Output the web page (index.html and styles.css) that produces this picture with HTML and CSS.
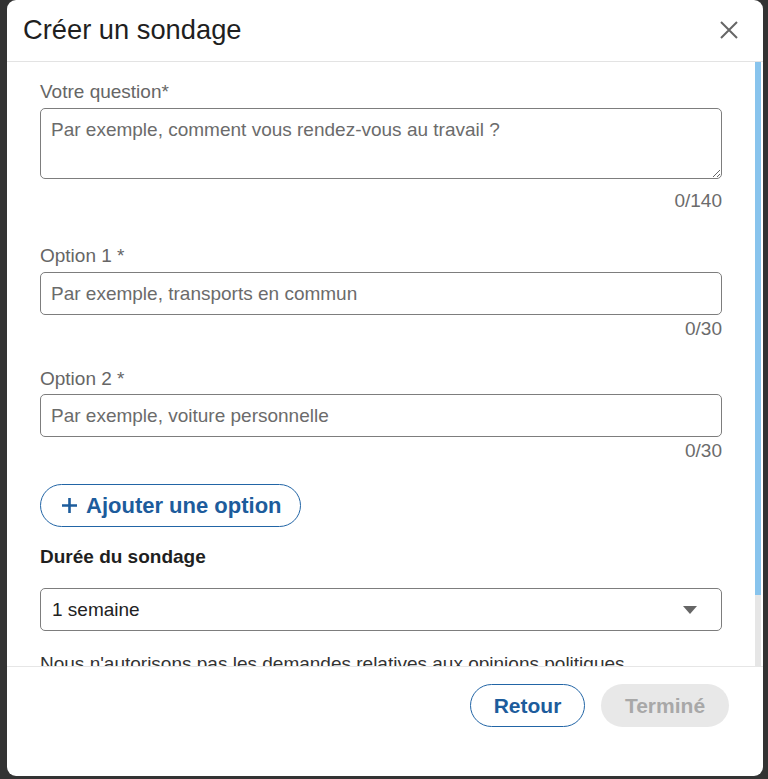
FILE: index.html
```html
<!DOCTYPE html>
<html lang="fr">
<head>
<meta charset="utf-8">
<title>Créer un sondage</title>
<link rel="stylesheet" href="styles.css">
</head>
<body>
<div class="modal">
  <header class="modal-header">
    <h2 class="modal-title">Créer un sondage</h2>
    <button class="close-btn" aria-label="Fermer">
      <svg width="20" height="20" viewBox="0 0 20 20"><path d="M2 2 L18 18 M18 2 L2 18" stroke="#666" stroke-width="2" fill="none"/></svg>
    </button>
  </header>
  <div class="modal-main">
    <div class="modal-body">
      <label class="field-label">Votre question*</label>
      <textarea class="question" placeholder="Par exemple, comment vous rendez-vous au travail ?"></textarea>
      <div class="counter counter-q">0/140</div>

      <label class="field-label opt1">Option 1 *</label>
      <input class="text-input in1" type="text" placeholder="Par exemple, transports en commun">
      <div class="counter">0/30</div>

      <label class="field-label opt2">Option 2 *</label>
      <input class="text-input in2" type="text" placeholder="Par exemple, voiture personnelle">
      <div class="counter">0/30</div>

      <button class="add-option">
        <svg width="17" height="17" viewBox="0 0 17 17"><path d="M8.5 1 V16 M1 8.5 H16" stroke="currentColor" stroke-width="2.6" fill="none"/></svg>
        <span>Ajouter une option</span>
      </button>

      <div class="section-title">Durée du sondage</div>
      <div class="select">
        <span>1 semaine</span>
        <span class="caret"></span>
      </div>

      <p class="notice">Nous n'autorisons pas les demandes relatives aux opinions politiques, informations médicales ou autres données sensibles.</p>
    </div>
    <div class="scrollbar" aria-hidden="true">
      <div class="scroll-thumb"></div>
      <div class="scroll-rest"></div>
    </div>
  </div>
  <footer class="modal-footer">
    <button class="btn btn-secondary">Retour</button>
    <button class="btn btn-disabled" disabled>Terminé</button>
  </footer>
</div>
</body>
</html>
```

FILE: styles.css
```css
* { box-sizing: border-box; }

html, body {
  margin: 0;
  height: 779px;
  overflow: hidden;
}

body {
  background: #333333;
  font-family: "Liberation Sans", Arial, sans-serif;
  padding: 0 5px 0 7px;
}

.modal {
  width: 756px;
  height: 776px;
  background: #ffffff;
  border-radius: 9px;
  display: flex;
  flex-direction: column;
  overflow: hidden;
}

.modal-header {
  height: 62px;
  flex: none;
  border-bottom: 1px solid #e3e3e3;
  display: flex;
  align-items: center;
  justify-content: space-between;
  padding: 0 24px 0 16px;
}

.modal-title {
  margin: 0;
  font-weight: normal;
  font-size: 27.3px;
  color: #1f1f1f;
  padding-bottom: 2px;
}

.close-btn {
  background: none;
  border: 0;
  padding: 0;
  width: 20px;
  height: 20px;
  display: flex;
  margin-bottom: 2px;
}

.modal-main {
  height: 604px;
  flex: none;
  display: flex;
}

.modal-body {
  flex: 1;
  min-width: 0;
  overflow: hidden;
  padding: 18px 33px 0 33px;
  display: flex;
  flex-direction: column;
}

.modal-body > * { flex: none; }

.scrollbar {
  width: 6px;
  margin-right: 2px;
  display: flex;
  flex-direction: column;
}
.scroll-thumb {
  height: 533px;
  background: #88c4ed;
}
.scroll-rest {
  flex: 1;
  background: #e6e6e6;
}

.field-label {
  font-size: 19px;
  line-height: 24px;
  color: #666666;
}

.opt1 { margin-top: 31px; }
.opt2 { margin-top: 26px; }

.question {
  margin-top: 4px;
  height: 71px;
  width: 100%;
  border: 1px solid #7d7d7d;
  border-radius: 5px;
  padding: 9px 10px;
  font-family: "Liberation Sans", Arial, sans-serif;
  font-size: 19px;
  line-height: 24px;
  color: #222;
  resize: vertical;
  outline: none;
}

.text-input {
  height: 43px;
  width: 100%;
  border: 1px solid #7d7d7d;
  border-radius: 5px;
  padding: 0 10px;
  font-family: "Liberation Sans", Arial, sans-serif;
  font-size: 19px;
  color: #222;
  outline: none;
}
.in1 { margin-top: 4px; }
.in2 { margin-top: 3px; }

.question::placeholder,
.text-input::placeholder {
  color: #6b6b6b;
}

.counter {
  text-align: right;
  font-size: 19px;
  line-height: 24px;
  color: #6b6b6b;
  margin-top: 2px;
}
.counter-q { margin-top: 10px; }

.add-option {
  margin-top: 21px;
  align-self: flex-start;
  width: 261px;
  height: 43px;
  border: 1.5px solid #2265a6;
  border-radius: 22px;
  background: #fff;
  color: #1d5c9c;
  font-family: "Liberation Sans", Arial, sans-serif;
  font-weight: bold;
  font-size: 22px;
  display: flex;
  align-items: center;
  gap: 8px;
  padding: 0 0 0 20px;
}

.section-title {
  margin-top: 18px;
  font-size: 19px;
  line-height: 24px;
  font-weight: bold;
  color: #1f1f1f;
}

.select {
  margin-top: 19px;
  height: 43px;
  border: 1px solid #7d7d7d;
  border-radius: 5px;
  display: flex;
  align-items: center;
  justify-content: space-between;
  padding: 0 24px 0 11px;
  font-size: 19px;
  color: #222;
}

.caret {
  width: 0;
  height: 0;
  border-left: 7px solid transparent;
  border-right: 7px solid transparent;
  border-top: 8px solid #666;
}

.notice {
  margin: 21px 0 0;
  font-size: 19px;
  line-height: 24px;
  color: #333;
}

.modal-footer {
  flex: 1;
  border-top: 1px solid #e6e6e6;
  display: flex;
  justify-content: flex-end;
  align-items: flex-start;
  gap: 16px;
  padding: 17px 34px 0 0;
}

.btn {
  height: 43px;
  border-radius: 22px;
  font-family: "Liberation Sans", Arial, sans-serif;
  font-weight: bold;
  font-size: 21px;
  padding: 0;
}

.btn-secondary {
  width: 115px;
  background: #fff;
  border: 1.5px solid #2265a6;
  color: #1d5c9c;
}

.btn-disabled {
  width: 128px;
  background: #e8e8e8;
  border: 0;
  color: #a8a8a8;
}
```
